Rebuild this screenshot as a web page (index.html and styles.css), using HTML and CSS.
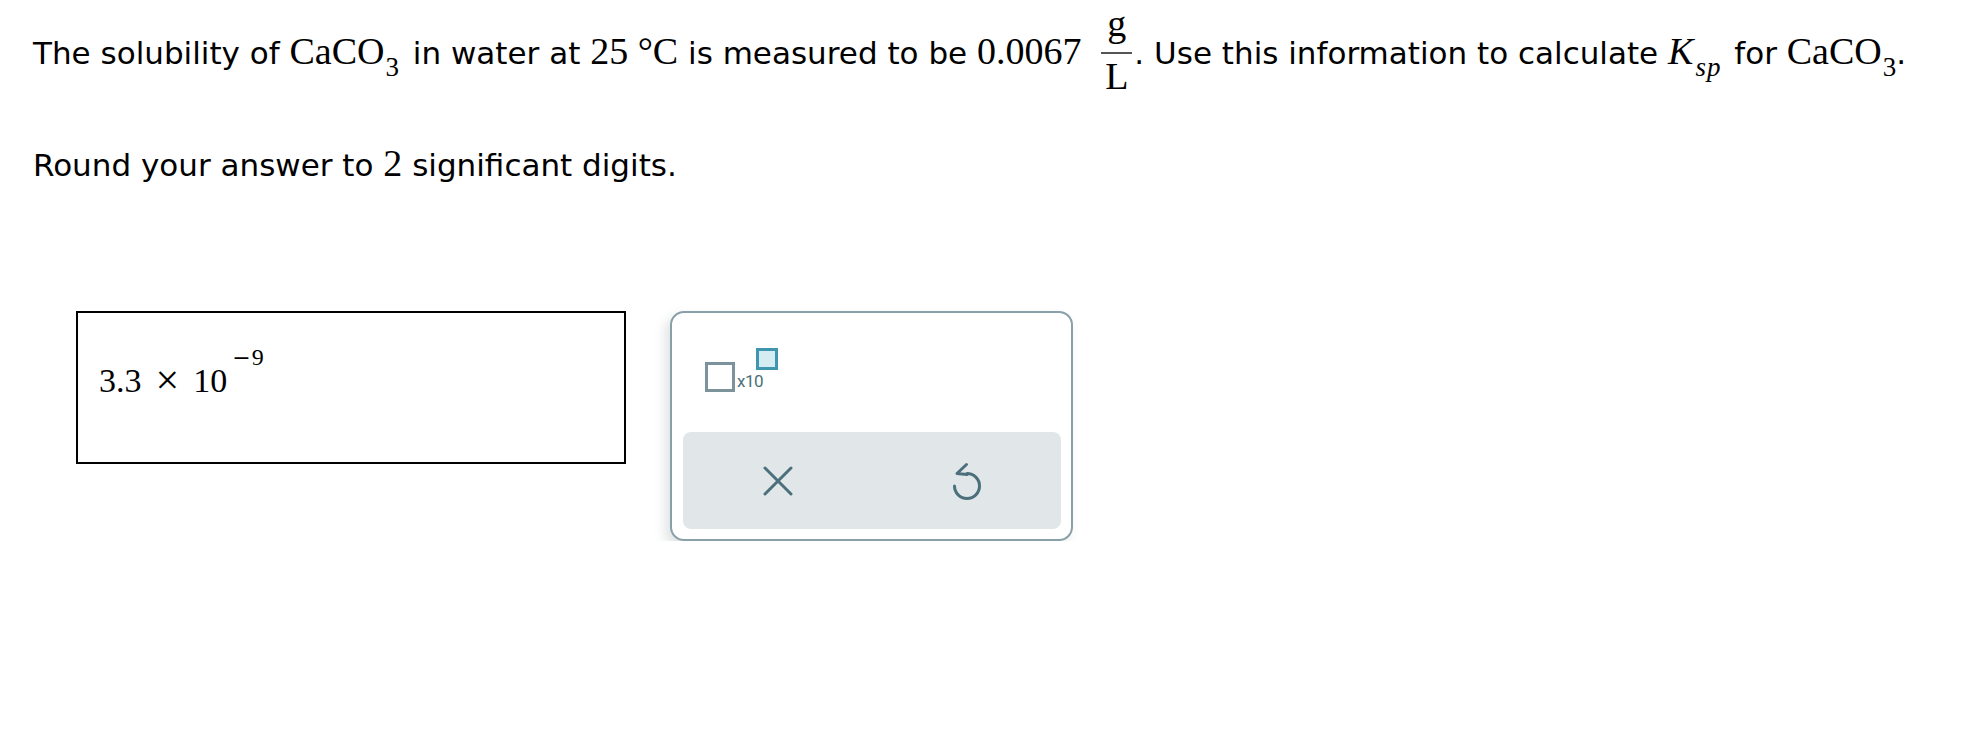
FILE: index.html
```html
<!DOCTYPE html>
<html>
<head>
<meta charset="utf-8">
<link rel="stylesheet" href="styles.css">
</head>
<body>
<div class="page">
  <p class="line1">The solubility of <span class="m">CaCO<span class="sub gap">3</span></span> in water at <span class="m">25 °C</span> is measured to be <span class="m">0.0067</span> <span class="frac"><span class="num">g</span><span class="bar"></span><span class="den">L</span></span>. Use this information to calculate <span class="m"><i>K</i><span class="sub sp"><i>sp</i></span></span> for <span class="m">CaCO<span class="sub">3</span></span>.</p>
  <p class="line2">Round your answer to <span class="m">2</span> significant digits.</p>
  <div class="work">
    <div class="answer">
      <span class="ans">3.3<span class="times">×</span>10<span class="sup"><span class="minus">−</span>9</span></span>
    </div>
    <div class="panel">
      <div class="tools">
        <div class="tmpl">
          <span class="sq-base"></span>
          <span class="x10">x10</span>
          <span class="sq-exp"></span>
        </div>
      </div>
      <div class="actions">
        <div class="btn">
          <svg width="30" height="30" viewBox="0 0 30 30"><path d="M2 2 L28 28 M28 2 L2 28" stroke="#4b6f7b" stroke-width="3" stroke-linecap="round" fill="none"/></svg>
        </div>
        <div class="btn">
          <svg width="34" height="44" viewBox="0 0 34 44"><path d="M17 14.5 A12.5 12.5 0 1 1 4.5 27" stroke="#4b6f7b" stroke-width="3" stroke-linecap="round" fill="none"/><path d="M16.5 5.5 L7 14.5 L17 15.5" stroke="#4b6f7b" stroke-width="3" stroke-linecap="round" stroke-linejoin="round" fill="none"/></svg>
        </div>
      </div>
    </div>
  </div>
</div>
</body>
</html>
```
FILE: styles.css
```css
html, body {
  margin: 0;
  padding: 0;
  background: #ffffff;
}
.page {
  padding-left: 33px;
  font-family: "DejaVu Sans", Verdana, sans-serif;
  font-size: 31px;
  color: #000;
}
.m {
  font-family: "Liberation Serif", "Times New Roman", serif;
  font-size: 38px;
  line-height: 1;
}
.sub {
  font-size: 27px;
  vertical-align: -12px;
  line-height: 1;
  margin-left: 1px;
}
.sub.gap {
  margin-right: 4px;
}
.sp {
  margin-left: 2px;
  margin-right: 3px;
}
.sp i {
  letter-spacing: 1px;
}
.line1 {
  margin: 0;
  padding-top: 4px;
  line-height: 40px;
}
.frac {
  display: inline-flex;
  flex-direction: column;
  align-items: center;
  vertical-align: 28px;
  font-family: "Liberation Serif", "Times New Roman", serif;
  font-size: 38px;
  line-height: 38px;
  margin-left: 10px;
  margin-right: 2px;
}
.frac .num {
  display: block;
  height: 38px;
  margin-bottom: 10px;
}
.frac .den {
  display: block;
  height: 38px;
  margin-top: 3px;
}
.frac .bar {
  display: block;
  width: 31px;
  height: 2px;
  background: #555;
}
.line2 {
  margin: 49px 0 0 0;
  line-height: 40px;
}
.work {
  display: flex;
  align-items: flex-start;
  gap: 44px;
  margin-top: 126px;
  margin-left: 43px;
}
.answer {
  box-sizing: border-box;
  width: 550px;
  height: 153px;
  border: 2px solid #000;
  padding: 32px 0 0 21px;
  line-height: 40px;
}
.ans {
  font-family: "Liberation Serif", "Times New Roman", serif;
  font-size: 34px;
}
.times {
  font-size: 42px;
  line-height: 1;
  vertical-align: -2px;
  margin: 0 14px 0 14px;
}
.sup {
  font-size: 24px;
  line-height: 1;
  vertical-align: 27px;
  margin-left: 5px;
}
.minus {
  font-family: "DejaVu Sans", sans-serif;
  font-size: 22px;
  margin-right: 1px;
}
.panel {
  box-sizing: border-box;
  width: 403px;
  height: 230px;
  border: 2px solid #8aa0a8;
  border-radius: 14px;
  padding: 0 10px 10px 11px;
  display: flex;
  flex-direction: column;
  background: #fff;
  box-shadow: -5px 6px 12px rgba(60, 80, 90, 0.16);
}
.tools {
  height: 119px;
  flex: none;
}
.tmpl {
  display: flex;
  align-items: flex-start;
  margin: 35px 0 0 22px;
}
.sq-base {
  box-sizing: border-box;
  width: 30px;
  height: 30px;
  border: 3px solid #7d939b;
  margin-top: 14px;
}
.x10 {
  font-family: Roboto, "Open Sans", sans-serif;
  font-size: 17px;
  line-height: 17px;
  color: #4b6f7b;
  margin: 25px 0 0 2px;
  letter-spacing: -0.5px;
}
.sq-exp {
  box-sizing: border-box;
  width: 22px;
  height: 22px;
  border: 3px solid #3e97ae;
  background: #d4ecf2;
  margin-left: -7px;
}
.actions {
  flex: 1;
  display: flex;
  background: #e1e6e9;
  border-radius: 8px;
}
.btn {
  flex: 1;
  display: flex;
  align-items: center;
  justify-content: center;
}
.btn svg {
  display: block;
}
```
